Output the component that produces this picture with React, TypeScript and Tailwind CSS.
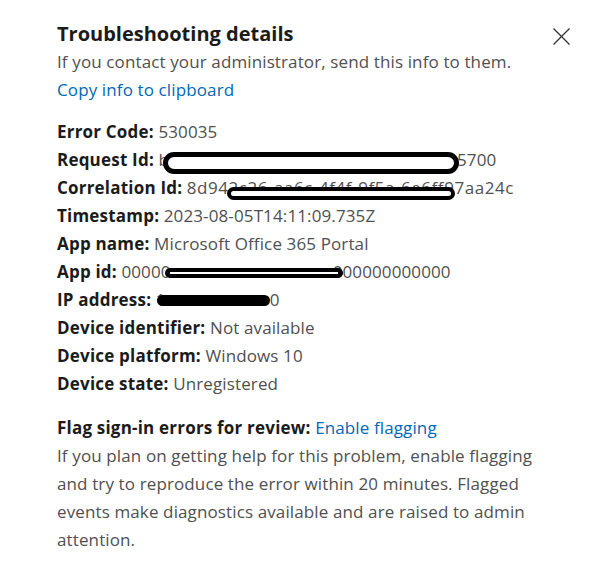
import React from 'react';

const font = { fontFamily: '"Segoe UI", "Open Sans", "Noto Sans", sans-serif' };

function Row({ label, children }: { label: string; children: React.ReactNode }) {
  return (
    <div className="relative h-[28px] leading-[28px] whitespace-nowrap">
      <span className="font-bold text-[#1b1b1b] tracking-[0.2px]">{label}:</span>{' '}
      <span className="text-[#505050]">{children}</span>
    </div>
  );
}

export default function App() {
  return (
    <div className="w-[614px] h-[574px] bg-white relative" style={font}>
      <button className="absolute left-[552px] top-[27px] w-[18px] h-[18px] flex items-center justify-center">
        <svg width="17" height="17" viewBox="0 0 17 17">
          <path d="M0.5 0.5 L16.5 16.5 M16.5 0.5 L0.5 16.5" stroke="#333" strokeWidth="1.3" />
        </svg>
      </button>

      <div className="pl-[57px] pt-[20px] text-[17px] tracking-[0.12px]">
        <h2 className="text-[20px] font-bold text-[#1b1b1b] leading-[28px] tracking-normal">Troubleshooting details</h2>
        <p className="text-[#505050] leading-[28px]">If you contact your administrator, send this info to them.</p>
        <a className="text-[#0067b8] leading-[28px] block">Copy info to clipboard</a>

        <div className="mt-[14px]">
          <Row label="Error Code">530035</Row>
          <Row label="Request Id">
            b<span className="inline-block w-[288px]" />5700
            <span className="absolute left-[106px] top-[6px] w-[296px] h-[22px] rounded-[12px] border-[5px] border-black bg-white" />
          </Row>
          <Row label="Correlation Id">
            <span className="tracking-[0.55px]">8d942c26-aa6c-4f4f-9f5a-6e6ff97aa24c</span>
            <span className="absolute left-[170px] top-[13px] w-[228px] h-[13px] rounded-[7px] border-[4px] border-black bg-white" />
          </Row>
          <Row label="Timestamp">2023-08-05T14:11:09.735Z</Row>
          <Row label="App name">Microsoft Office 365 Portal</Row>
          <Row label="App id">
            00000<span className="inline-block w-[162px]" />000000000000
            <span className="absolute left-[108px] top-[10px] w-[178px] h-[10px] rounded-[5px] bg-black flex items-center px-[5px]">
              <span className="block w-full h-[2px] bg-white" />
            </span>
          </Row>
          <Row label="IP address">
            1<span className="inline-block w-[104px]" />0
            <span className="absolute left-[100px] top-[9px] w-[113px] h-[11px] rounded-[6px] bg-black" />
          </Row>
          <Row label="Device identifier">Not available</Row>
          <Row label="Device platform">Windows 10</Row>
          <Row label="Device state">Unregistered</Row>
        </div>

        <div className="mt-[16px] w-[495px]">
          <div className="leading-[28px]">
            <span className="font-bold text-[#1b1b1b] tracking-[0.2px]">Flag sign-in errors for review:</span>{' '}
            <a className="text-[#0067b8]">Enable flagging</a>
          </div>
          <p className="text-[#505050] leading-[28px]">
            If you plan on getting help for this problem, enable flagging and try to reproduce the error within 20 minutes. Flagged events make diagnostics available and are raised to admin attention.
          </p>
        </div>
      </div>
    </div>
  );
}
